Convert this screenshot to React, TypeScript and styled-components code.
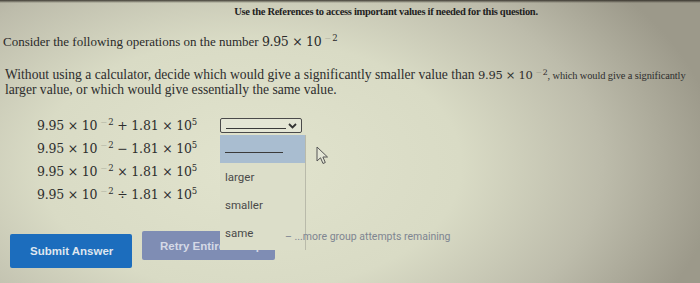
import React from 'react';
import styled, { createGlobalStyle } from 'styled-components';

const GlobalStyle = createGlobalStyle`
  html, body {
    margin: 0;
    padding: 0;
    width: 700px;
    height: 283px;
    overflow: hidden;
  }
  body {
    background:
      linear-gradient(180deg, rgba(40, 36, 30, 0.85) 0px, rgba(40, 36, 30, 0) 3px),
      radial-gradient(ellipse 470px 280px at 250px 165px, #e1e3cd 0%, #d9dbc5 45%, #bdbcab 75%, #9c998a 100%);
    color: #2b2b2b;
    font-family: "Liberation Serif", "Times New Roman", serif;
  }
`;

const Page = styled.div`
  position: relative;
  width: 700px;
  height: 283px;
  padding-top: 4px;
  box-sizing: border-box;
`;

const Header = styled.div`
  padding-left: 72px;
  text-align: center;
  font-size: 10.5px;
  line-height: 16px;
  font-weight: bold;
  letter-spacing: -0.3px;
  color: #1f1f1f;
`;

const Question = styled.div`
  margin-top: 13px;
  padding-left: 3px;
  font-size: 13px;
  line-height: 18px;
  color: #2a2a2a;
`;

const Paragraph = styled.div`
  margin-top: 17px;
  padding-left: 5px;
  font-size: 13.6px;
  line-height: 14px;
  color: #2d2d2d;
`;

const Small = styled.span`
  font-size: 10.4px;
  letter-spacing: -0.1px;
`;

const Num = styled.span<{ $size?: number }>`
  font-family: "DejaVu Serif", "Liberation Serif", serif;
  font-size: ${p => p.$size ?? 12}px;
  letter-spacing: -0.3px;
`;

const Sup = styled.sup`
  font-size: 0.68em;
  vertical-align: 0.55em;
  line-height: 0;
`;

const Faint = styled.span`
  opacity: 0.2;
  margin: 0 1px 0 3px;
`;

const Problems = styled.div`
  margin-top: 17px;
  padding-left: 37px;
  display: grid;
  grid-template-columns: 183px 90px;
  grid-auto-rows: 23px;
  align-items: center;
`;

const Expr = styled.div`
  font-family: "DejaVu Serif", "Liberation Serif", serif;
  font-size: 12.5px;
  letter-spacing: -0.2px;
  color: #2e2e2e;
  white-space: nowrap;
`;

const SelectCell = styled.div`
  position: relative;
  height: 23px;
  display: flex;
  align-items: center;
`;

const SelectBox = styled.div`
  width: 82px;
  height: 15px;
  box-sizing: border-box;
  border: 1px solid #4a4a4a;
  border-radius: 2px;
  display: flex;
  align-items: center;
  justify-content: space-between;
  padding: 0 4px 0 5px;
  background: rgba(232, 234, 220, 0.6);
`;

const Blank = styled.span<{ $w: number }>`
  display: block;
  width: ${p => p.$w}px;
  height: 0;
  border-bottom: 1px solid #3a3a3a;
  margin-top: 6px;
`;

const Menu = styled.div`
  position: absolute;
  top: 21px;
  left: 0;
  width: 86px;
  height: 115px;
  box-sizing: border-box;
  border-right: 1px solid #b9baaa;
  background: #dcdec9;
  font-family: Roboto, "Liberation Sans", Arial, sans-serif;
  font-size: 11.5px;
  color: #4a4a4a;
  z-index: 2;
`;

const Option = styled.div<{ $active?: boolean }>`
  height: 28px;
  display: flex;
  align-items: center;
  padding-left: 5px;
  background: ${p => (p.$active ? '#a9bdd0' : 'transparent')};
`;

const Cursor = styled.svg`
  position: absolute;
  left: 316px;
  top: 146px;
`;

const Actions = styled.div`
  margin-top: 25px;
  padding-left: 10px;
  display: flex;
  align-items: flex-start;
  gap: 10px;
`;

const Button = styled.div<{ $primary?: boolean }>`
  width: ${p => (p.$primary ? 122 : 133)}px;
  height: ${p => (p.$primary ? 34 : 29)}px;
  margin-top: ${p => (p.$primary ? 3 : 0)}px;
  box-sizing: border-box;
  border-radius: 2px;
  background: ${p => (p.$primary ? '#1c6dbd' : '#7f8db4')};
  color: ${p => (p.$primary ? '#dfe6ef' : '#d5d9e6')};
  font-family: "Liberation Sans", Arial, sans-serif;
  font-weight: bold;
  font-size: 11.5px;
  display: flex;
  align-items: center;
  padding-left: ${p => (p.$primary ? 20 : 18)}px;
`;

const Remaining = styled.div`
  position: relative;
  z-index: 3;
  margin-top: -1px;
  font-family: Roboto, "Liberation Sans", Arial, sans-serif;
  font-size: 10.5px;
  color: #7e8591;
`;

const ten = (
  <>
    9.95 × 10<Sup><Faint>−</Faint>2</Sup>
  </>
);

const rows = ['+', '−', '×', '÷'];

export default function App() {
  return (
    <Page>
      <GlobalStyle />
      <Header>Use the References to access important values if needed for this question.</Header>
      <Question>
        Consider the following operations on the number <Num $size={12.5}>{ten}</Num>
      </Question>
      <Paragraph>
        Without using a calculator, decide which would give a significantly smaller value than{' '}
        <Num $size={11.5}>{ten}</Num>
        <Small>, which would give a significantly</Small> larger value, or which would give essentially the same value.
      </Paragraph>
      <Problems>
        {rows.map((op, i) => (
          <React.Fragment key={op}>
            <Expr>
              {ten} {op} 1.81 × 10<Sup>5</Sup>
            </Expr>
            <SelectCell>
              {i === 0 && (
                <>
                  <SelectBox>
                    <Blank $w={60} />
                    <svg width="9" height="6" viewBox="0 0 9 6">
                      <path d="M1 1 L4.5 4.5 L8 1" fill="none" stroke="#333" strokeWidth="1.8" />
                    </svg>
                  </SelectBox>
                  <Menu>
                    <Option $active>
                      <Blank $w={58} />
                    </Option>
                    <Option>larger</Option>
                    <Option>smaller</Option>
                    <Option>same</Option>
                  </Menu>
                </>
              )}
            </SelectCell>
          </React.Fragment>
        ))}
      </Problems>
      <Actions>
        <Button $primary>Submit Answer</Button>
        <Button>Retry Entire Group</Button>
        <Remaining>– ...more group attempts remaining</Remaining>
      </Actions>
      <Cursor width="13" height="19" viewBox="0 0 13 19">
        <path d="M1 1 L1 15 L4.5 11.8 L7 17.5 L9.3 16.5 L6.9 11 L11.5 11 Z" fill="#e4e6d6" stroke="#555" strokeWidth="1" strokeLinejoin="round" />
      </Cursor>
    </Page>
  );
}
